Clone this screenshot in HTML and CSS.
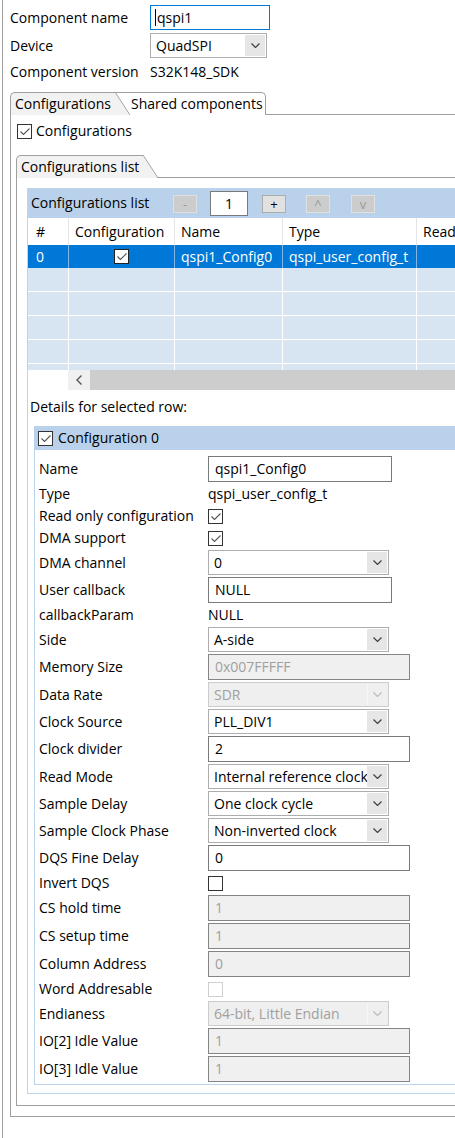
FILE: index.html
```html
<!DOCTYPE html>
<html lang="en">

    <head>
        <meta charset="UTF-8">
        <title>qspi1 - Component</title>
        <link rel="stylesheet" href="styles.css">
    </head>

    <body>
        <div class="editor">

            <div class="head-form">
                <span class="head-label">Component name</span>
                <div class="field focused head-name"><span class="caret"></span>qspi1</div>

                <span class="head-label">Device</span>
                <div class="select head-device">
                    <span class="text">QuadSPI</span>
                    <span class="arrow"><svg class="chev" width="9" height="5" viewBox="0 0 9 5"><polyline points="0.5,0.5 4.5,4.5 8.5,0.5"/></svg></span>
                </div>

                <span class="head-label">Component version</span>
                <span class="head-value">S32K148_SDK</span>
            </div>

            <!-- outer tab folder -->
            <div class="folder outer">
                <div class="tabs">
                    <div class="tab active">Configurations</div>
                    <div class="tab-slant behind"></div>
                    <div class="tab other">Shared components</div>
                    <div class="tab-rest"></div>
                </div>

                <div class="folder-body">
                    <div class="check-row">
                        <span class="check"><svg width="10" height="7" viewBox="0 0 10 7"><polyline points="0.5,3.5 3.5,6.5 9.5,0.5"/></svg></span>
                        <span>Configurations</span>
                    </div>

                    <!-- inner tab folder -->
                    <div class="folder inner">
                        <div class="tabs">
                            <div class="tab active">Configurations list</div>
                            <div class="tab-slant"></div>
                            <div class="tab-rest"></div>
                        </div>

                        <div class="folder-body">
                            <div class="panel">

                                <div class="list-bar">
                                    <span class="list-title">Configurations list</span>
                                    <span class="btn disabled btn-minus">-</span>
                                    <span class="spin">1</span>
                                    <span class="btn btn-plus">+</span>
                                    <span class="btn disabled btn-up">^</span>
                                    <span class="btn disabled btn-down">v</span>
                                </div>

                                <div class="grid-head">
                                    <span class="cell c1">#</span>
                                    <span class="cell">Configuration</span>
                                    <span class="cell">Name</span>
                                    <span class="cell">Type</span>
                                    <span class="cell">Read</span>
                                </div>

                                <div class="grid-body">
                                    <div class="grid-row selected">
                                        <span class="cell c1">0</span>
                                        <span class="cell centered">
                                            <span class="check table-check"><svg width="10" height="7" viewBox="0 0 10 7"><polyline points="0.5,3.5 3.5,6.5 9.5,0.5"/></svg></span>
                                        </span>
                                        <span class="cell">qspi1_Config0</span>
                                        <span class="cell">qspi_user_config_t</span>
                                        <span class="cell"></span>
                                    </div>
                                    <div class="grid-row"><span class="cell c1"></span><span class="cell"></span><span class="cell"></span><span class="cell"></span><span class="cell"></span></div>
                                    <div class="grid-row"><span class="cell c1"></span><span class="cell"></span><span class="cell"></span><span class="cell"></span><span class="cell"></span></div>
                                    <div class="grid-row"><span class="cell c1"></span><span class="cell"></span><span class="cell"></span><span class="cell"></span><span class="cell"></span></div>
                                    <div class="grid-row"><span class="cell c1"></span><span class="cell"></span><span class="cell"></span><span class="cell"></span><span class="cell"></span></div>
                                    <div class="grid-row"><span class="cell c1"></span><span class="cell"></span><span class="cell"></span><span class="cell"></span><span class="cell"></span></div>
                                </div>

                                <div class="hscroll">
                                    <span class="hscroll-gap"></span>
                                    <span class="hscroll-btn"><svg width="6" height="10" viewBox="0 0 6 10"><polyline points="5.5,0.5 1,5 5.5,9.5"/></svg></span>
                                    <span class="hscroll-thumb"></span>
                                </div>

                                <div class="details-label">Details for selected row:</div>

                                <div class="group">
                                    <div class="group-head">
                                        <span class="check"><svg width="10" height="7" viewBox="0 0 10 7"><polyline points="0.5,3.5 3.5,6.5 9.5,0.5"/></svg></span>
                                        <span>Configuration 0</span>
                                    </div>

                                    <div class="props">
                                        <div class="prop">
                                            <span class="prop-label">Name</span>
                                            <div class="field short">qspi1_Config0</div>
                                        </div>
                                        <div class="prop">
                                            <span class="prop-label">Type</span>
                                            <span>qspi_user_config_t</span>
                                        </div>
                                        <div class="prop">
                                            <span class="prop-label">Read only configuration</span>
                                            <span class="check"><svg width="10" height="7" viewBox="0 0 10 7"><polyline points="0.5,3.5 3.5,6.5 9.5,0.5"/></svg></span>
                                        </div>
                                        <div class="prop">
                                            <span class="prop-label">DMA support</span>
                                            <span class="check"><svg width="10" height="7" viewBox="0 0 10 7"><polyline points="0.5,3.5 3.5,6.5 9.5,0.5"/></svg></span>
                                        </div>
                                        <div class="prop">
                                            <span class="prop-label">DMA channel</span>
                                            <div class="select">
                                                <span class="text">0</span>
                                                <span class="arrow"><svg class="chev" width="9" height="5" viewBox="0 0 9 5"><polyline points="0.5,0.5 4.5,4.5 8.5,0.5"/></svg></span>
                                            </div>
                                        </div>
                                        <div class="prop">
                                            <span class="prop-label">User callback</span>
                                            <div class="field short">NULL</div>
                                        </div>
                                        <div class="prop">
                                            <span class="prop-label">callbackParam</span>
                                            <span>NULL</span>
                                        </div>
                                        <div class="prop">
                                            <span class="prop-label">Side</span>
                                            <div class="select">
                                                <span class="text">A-side</span>
                                                <span class="arrow"><svg class="chev" width="9" height="5" viewBox="0 0 9 5"><polyline points="0.5,0.5 4.5,4.5 8.5,0.5"/></svg></span>
                                            </div>
                                        </div>
                                        <div class="prop">
                                            <span class="prop-label">Memory Size</span>
                                            <div class="field wide disabled">0x007FFFFF</div>
                                        </div>
                                        <div class="prop">
                                            <span class="prop-label">Data Rate</span>
                                            <div class="select disabled">
                                                <span class="text">SDR</span>
                                                <span class="arrow"><svg class="chev" width="9" height="5" viewBox="0 0 9 5"><polyline points="0.5,0.5 4.5,4.5 8.5,0.5"/></svg></span>
                                            </div>
                                        </div>
                                        <div class="prop">
                                            <span class="prop-label">Clock Source</span>
                                            <div class="select">
                                                <span class="text">PLL_DIV1</span>
                                                <span class="arrow"><svg class="chev" width="9" height="5" viewBox="0 0 9 5"><polyline points="0.5,0.5 4.5,4.5 8.5,0.5"/></svg></span>
                                            </div>
                                        </div>
                                        <div class="prop">
                                            <span class="prop-label">Clock divider</span>
                                            <div class="field wide">2</div>
                                        </div>
                                        <div class="prop">
                                            <span class="prop-label">Read Mode</span>
                                            <div class="select">
                                                <span class="text">Internal reference clock</span>
                                                <span class="arrow"><svg class="chev" width="9" height="5" viewBox="0 0 9 5"><polyline points="0.5,0.5 4.5,4.5 8.5,0.5"/></svg></span>
                                            </div>
                                        </div>
                                        <div class="prop">
                                            <span class="prop-label">Sample Delay</span>
                                            <div class="select">
                                                <span class="text">One clock cycle</span>
                                                <span class="arrow"><svg class="chev" width="9" height="5" viewBox="0 0 9 5"><polyline points="0.5,0.5 4.5,4.5 8.5,0.5"/></svg></span>
                                            </div>
                                        </div>
                                        <div class="prop">
                                            <span class="prop-label">Sample Clock Phase</span>
                                            <div class="select">
                                                <span class="text">Non-inverted clock</span>
                                                <span class="arrow"><svg class="chev" width="9" height="5" viewBox="0 0 9 5"><polyline points="0.5,0.5 4.5,4.5 8.5,0.5"/></svg></span>
                                            </div>
                                        </div>
                                        <div class="prop">
                                            <span class="prop-label">DQS Fine Delay</span>
                                            <div class="field wide">0</div>
                                        </div>
                                        <div class="prop">
                                            <span class="prop-label">Invert DQS</span>
                                            <span class="check"></span>
                                        </div>
                                        <div class="prop">
                                            <span class="prop-label">CS hold time</span>
                                            <div class="field wide disabled">1</div>
                                        </div>
                                        <div class="prop">
                                            <span class="prop-label">CS setup time</span>
                                            <div class="field wide disabled">1</div>
                                        </div>
                                        <div class="prop">
                                            <span class="prop-label">Column Address</span>
                                            <div class="field wide disabled">0</div>
                                        </div>
                                        <div class="prop">
                                            <span class="prop-label">Word Addresable</span>
                                            <span class="check disabled"></span>
                                        </div>
                                        <div class="prop">
                                            <span class="prop-label">Endianess</span>
                                            <div class="select disabled">
                                                <span class="text">64-bit, Little Endian</span>
                                                <span class="arrow"><svg class="chev" width="9" height="5" viewBox="0 0 9 5"><polyline points="0.5,0.5 4.5,4.5 8.5,0.5"/></svg></span>
                                            </div>
                                        </div>
                                        <div class="prop">
                                            <span class="prop-label">IO[2] Idle Value</span>
                                            <div class="field wide disabled">1</div>
                                        </div>
                                        <div class="prop">
                                            <span class="prop-label">IO[3] Idle Value</span>
                                            <div class="field wide disabled">1</div>
                                        </div>
                                    </div>
                                </div>

                            </div>
                        </div>
                    </div>
                </div>
            </div>

        </div>
    </body>

</html>
```

FILE: styles.css
```css
* {
    padding: 0;
    margin: 0;
    box-sizing: border-box;
}

html,
body {
    height: 100%;
    overflow: hidden;
}

body {
    background-color: #fff;
    color: #000;
    font-family: "Open Sans", "Noto Sans", sans-serif;
    font-size: 14px;
    line-height: 20px;
}

.editor {
    width: 640px;
    min-height: 100%;
    margin-left: 2px;
    border-left: 1px solid #a0a0a0;
}

/* header fields */
.head-form {
    display: grid;
    grid-template-columns: 140px auto;
    row-gap: 3px;
    align-items: center;
    justify-items: start;
    padding: 5px 0 0 7px;
}

.head-value {
    line-height: 22px;
}

.caret {
    width: 1px;
    height: 17px;
    margin-right: 1px;
    background-color: #000;
}

/* controls */
.field {
    display: flex;
    align-items: center;
    height: 26px;
    padding: 0 6px;
    border: 1px solid #7a7a7a;
    background-color: #fff;
    white-space: nowrap;
}

.field.focused {
    border-color: #0078d7;
}

.field.short {
    width: 184px;
}

.field.wide {
    width: 202px;
}

.field.disabled {
    background-color: #f0f0f0;
    border-color: #858585;
    color: #a0a0a0;
}

.select {
    display: flex;
    width: 181px;
    height: 25px;
    padding: 1px;
    border: 1px solid #adadad;
    background-color: #fff;
}

.select .text {
    flex: 1;
    overflow: hidden;
    white-space: nowrap;
    padding-left: 4px;
    line-height: 21px;
}

.select .arrow {
    flex: none;
    width: 20px;
    display: flex;
    align-items: center;
    justify-content: center;
    background-color: #e6e6e6;
}

.chev polyline {
    fill: none;
    stroke: #404040;
    stroke-width: 1.2;
}

.select.disabled {
    background-color: #efefef;
    border-color: #cccccc;
    color: #a0a0a0;
}

.select.disabled .arrow {
    background-color: #efefef;
    border-left: 1px solid #f7f7f7;
}

.select.disabled .chev polyline {
    stroke: #bdbdbd;
}

.field.head-name {
    width: 120px;
    height: 25px;
    padding-left: 4px;
}

.select.head-device {
    width: 117px;
}

.check {
    flex: none;
    width: 15px;
    height: 15px;
    display: flex;
    align-items: center;
    justify-content: center;
    border: 1px solid #333;
    background-color: #fff;
}

.check polyline {
    fill: none;
    stroke: #555;
    stroke-width: 1.1;
}

.check.disabled {
    border-color: #cfcfcf;
}

/* tab folders */
.tabs {
    display: flex;
    height: 23px;
}

.tab {
    display: flex;
    align-items: center;
    padding: 0 4px;
    border-top: 1px solid #a0a0a0;
    white-space: nowrap;
}

.tab.active {
    background-color: #f2f2f2;
    border-left: 1px solid #a0a0a0;
    border-top-left-radius: 5px;
}

.tab.other {
    padding: 0 2px 0 1px;
    border-right: 1px solid #a0a0a0;
    border-top-right-radius: 5px;
}

.tab-slant {
    flex: none;
    width: 15px;
    background: linear-gradient(to top right, #f2f2f2 calc(50% - 0.8px), #a0a0a0 50%, #fff calc(50% + 0.8px));
}

.tab-slant.behind {
    box-shadow: inset 0 1px 0 #a0a0a0;
}

.tab-rest {
    flex: 1;
    border-bottom: 1px solid #a0a0a0;
}

.folder-body {
    border-left: 1px solid #a0a0a0;
    border-bottom: 1px solid #a0a0a0;
}

.folder.outer {
    margin: 9px 0 0 7px;
}

.outer > .folder-body {
    padding: 6px 0 10px 5px;
}

.check-row {
    display: flex;
    align-items: center;
    gap: 4px;
    height: 20px;
    margin-left: 1px;
}

.folder.inner {
    margin-top: 14px;
}

.inner > .folder-body {
    padding: 10px 0 11px 10px;
}

/* configurations panel */
.panel {
    border: 1px solid #bcd4ec;
    border-right: none;
}

.list-bar {
    display: flex;
    align-items: center;
    height: 29px;
    padding-left: 3px;
    background-color: #b9d1ea;
}

.list-title {
    width: 142px;
    margin-top: -2px;
}

.btn {
    width: 24px;
    height: 18px;
    border: 1px solid #adadad;
    background-color: #e1e1e1;
    font-size: 13px;
    line-height: 16px;
    text-align: center;
}

.btn.disabled {
    border-color: #e0e0e0;
    background-color: #cccccc;
    color: #9a9a9a;
}

.spin {
    width: 38px;
    height: 25px;
    margin: 0 14px 0 13px;
    border: 1px solid #7a7a7a;
    background-color: #fff;
    text-align: center;
    line-height: 23px;
}

.btn-up {
    margin-left: 20px;
}

.btn-down {
    margin-left: 21px;
}

.grid-head,
.grid-row {
    display: grid;
    grid-template-columns: 40px 106px 108px 134px 160px;
    white-space: nowrap;
}

.grid-head {
    height: 27px;
    background-color: #fff;
}

.cell {
    padding-left: 6px;
    border-left: 1px solid #e5e5e5;
    line-height: 27px;
    overflow: hidden;
}

.cell.c1 {
    padding-left: 8px;
    border-left: none;
}

.grid-body {
    height: 125px;
    overflow: hidden;
}

.grid-row {
    height: 24px;
    background-color: #d7e4f2;
    border-bottom: 1px solid #fff;
}

.grid-row .cell {
    border-left-color: #fff;
    line-height: 23px;
}

.grid-row.selected {
    height: 23px;
    border-bottom: none;
    background-color: #0078d7;
    color: #fff;
}

.grid-row.selected .cell {
    border-left-color: #7fb7e8;
}

.grid-row .cell.c1 {
    border-left: none;
}

.cell.centered {
    display: flex;
    align-items: center;
    justify-content: center;
    padding-left: 0;
}

.table-check {
    border-color: #222;
}

.hscroll {
    display: flex;
    height: 20px;
}

.hscroll-gap {
    width: 40px;
    background-color: #fff;
}

.hscroll-btn {
    width: 22px;
    display: flex;
    align-items: center;
    justify-content: center;
    background-color: #f0f0f0;
}

.hscroll-btn polyline {
    fill: none;
    stroke: #555;
    stroke-width: 1.4;
}

.hscroll-thumb {
    flex: 1;
    background-color: #cdcdcd;
}

.details-label {
    margin-top: 6px;
    padding-left: 2px;
    line-height: 22px;
}

/* selected row details */
.group {
    margin: 8px 0 8px 6px;
    border-left: 1px solid #bcd4ec;
    border-bottom: 1px solid #bcd4ec;
}

.group-head {
    display: flex;
    align-items: center;
    gap: 5px;
    height: 24px;
    margin-left: -1px;
    padding-left: 4px;
    background-color: #b9d1ea;
}

.props {
    display: flex;
    flex-direction: column;
    gap: 2px;
    padding: 6px 0 2px 4px;
}

.prop {
    display: flex;
    align-items: center;
    min-height: 20px;
}

.prop-label {
    flex: none;
    width: 169px;
    white-space: nowrap;
}
```
